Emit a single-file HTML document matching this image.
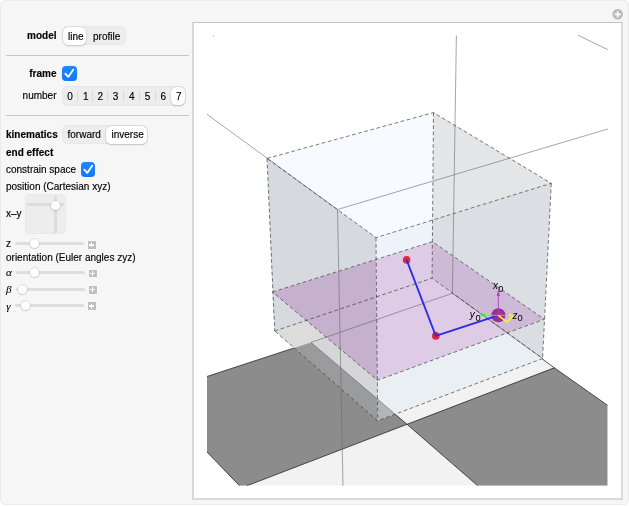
<!DOCTYPE html>
<html>
<head>
<meta charset="utf-8">
<style>
html,body{margin:0;padding:0;background:#fff;}
body{width:629px;height:506px;position:relative;overflow:hidden;font-family:"Liberation Sans",sans-serif;font-size:10px;color:#000;-webkit-text-stroke:0.15px #000;}
#outer{position:absolute;left:0;top:0;width:627px;height:503px;background:#f6f6f6;border:1px solid #eaeaea;border-radius:5px;}
.t{position:absolute;white-space:nowrap;line-height:12px;height:12px;}
.b{font-weight:bold;}
.r{text-align:right;}
.sep{position:absolute;left:6px;width:183px;height:1px;background:#c6c6c6;}
.seg{position:absolute;background:#ededed;border-radius:6px;box-shadow:inset 0 0 0 0.5px #e2e2e2;}
.sel{position:absolute;background:#fff;border-radius:5.5px;box-shadow:0 0 0 0.5px #cfcfcf,0 1px 1.5px rgba(0,0,0,0.22);}
.chk{position:absolute;width:14.6px;height:14.6px;border-radius:3.8px;background:linear-gradient(#2386fc,#117afa);}
.track{position:absolute;height:3px;border-radius:1.5px;background:#dedede;}
.knob{position:absolute;width:9px;height:9px;border-radius:50%;background:#fff;box-shadow:0 0 0 0.5px #cfcfcf,0 0.5px 1.5px rgba(0,0,0,0.3);}
.plus{position:absolute;width:7.6px;height:7.6px;background:#bfbfbf;box-shadow:0 0 0 0.6px #fbfbfb;}
.plus:before{content:"";position:absolute;left:1.3px;top:3.1px;width:5px;height:1.4px;background:#fff;}
.plus:after{content:"";position:absolute;left:3.1px;top:1.3px;width:1.4px;height:5px;background:#fff;}
.gk{font-family:"Liberation Serif",serif;font-style:italic;font-size:11px;-webkit-text-stroke:0.1px #000;}
#gp{position:absolute;left:192px;top:22px;width:427px;height:475px;background:#fff;border-style:solid;border-color:#c4c4c4 #dadada #dadada #dadada;border-width:1px 2px 2px 2px;}
</style>
</head>
<body>
<div id="outer"></div>

<!-- controls -->
<div id="ctl" style="position:absolute;left:0;top:0;width:629px;height:506px;will-change:transform;">
<div class="t b r" style="left:0;width:56.5px;top:30px;">model</div>
<div class="seg" style="left:62.3px;top:26.3px;width:63.3px;height:19.2px;"></div>
<div class="sel" style="left:62.8px;top:26.7px;width:23.4px;height:18.4px;"></div>
<div class="t" style="left:68px;top:30.5px;">line</div>
<div class="t" style="left:93px;top:30.5px;">profile</div>

<div class="sep" style="top:55px;"></div>

<div class="t b r" style="left:0;width:56.5px;top:68px;">frame</div>
<div class="chk" style="left:62.3px;top:66.3px;"><svg width="15" height="15" viewBox="0 0 15 15" style="position:absolute;left:0;top:0"><path d="M3.3 7.7 L6.2 10.9 L11.2 3.8" fill="none" stroke="#fff" stroke-width="1.8" stroke-linecap="round" stroke-linejoin="round"/></svg></div>

<div class="t r" style="left:0;width:56.5px;top:90px;">number</div>
<div class="seg" style="left:62.3px;top:86.3px;width:123.7px;height:20px;"></div>
<div class="sel" style="left:170.8px;top:87.2px;width:14.6px;height:18.2px;"></div>
<div class="t" style="left:60.1px;width:20px;text-align:center;top:91px;">0</div>
<div class="t" style="left:75.7px;width:20px;text-align:center;top:91px;">1</div>
<div class="t" style="left:90.2px;width:20px;text-align:center;top:91px;">2</div>
<div class="t" style="left:105.5px;width:20px;text-align:center;top:91px;">3</div>
<div class="t" style="left:121.8px;width:20px;text-align:center;top:91px;">4</div>
<div class="t" style="left:137.6px;width:20px;text-align:center;top:91px;">5</div>
<div class="t" style="left:153.4px;width:20px;text-align:center;top:91px;">6</div>
<div class="t" style="left:168.7px;width:20px;text-align:center;top:91px;">7</div>
<div style="position:absolute;left:77.4px;top:91px;width:1px;height:10.5px;background:#dadada;"></div>
<div style="position:absolute;left:92.3px;top:91px;width:1px;height:10.5px;background:#dadada;"></div>
<div style="position:absolute;left:107.2px;top:91px;width:1px;height:10.5px;background:#dadada;"></div>
<div style="position:absolute;left:122.8px;top:91px;width:1px;height:10.5px;background:#dadada;"></div>
<div style="position:absolute;left:139.1px;top:91px;width:1px;height:10.5px;background:#dadada;"></div>
<div style="position:absolute;left:154.9px;top:91px;width:1px;height:10.5px;background:#dadada;"></div>


<div class="sep" style="top:115px;"></div>

<div class="t b" style="left:6px;top:129px;">kinematics</div>
<div class="seg" style="left:62.2px;top:125.3px;width:85.7px;height:19px;"></div>
<div class="sel" style="left:105.8px;top:125.8px;width:41.6px;height:18px;"></div>
<div class="t" style="left:67.5px;top:128.5px;">forward</div>
<div class="t" style="left:111.5px;top:128.5px;">inverse</div>

<div class="t b" style="left:6px;top:147px;">end effect</div>
<div class="t" style="left:6px;top:164px;">constrain space</div>
<div class="chk" style="left:80.8px;top:162.3px;"><svg width="15" height="15" viewBox="0 0 15 15" style="position:absolute;left:0;top:0"><path d="M3.3 7.7 L6.2 10.9 L11.2 3.8" fill="none" stroke="#fff" stroke-width="1.8" stroke-linecap="round" stroke-linejoin="round"/></svg></div>
<div class="t" style="left:6px;top:180.5px;">position (Cartesian xyz)</div>

<div class="t" style="left:6px;top:207.5px;">x&#8211;y</div>
<div style="position:absolute;left:24.9px;top:193.9px;width:41.1px;height:39.8px;border-radius:5px;background:#ededed;box-shadow:inset 0 0 0 0.5px #e4e4e4;"></div>
<div style="position:absolute;left:27px;top:203px;width:37px;height:2.5px;background:#dcdcdc;border-radius:1px;"></div>
<div style="position:absolute;left:54px;top:195.5px;width:2.6px;height:37.5px;background:#dcdcdc;border-radius:1px;"></div>
<div class="knob" style="left:50.5px;top:200.5px;"></div>

<div class="t" style="left:6px;top:238.4px;">z</div>
<div class="track" style="left:15px;top:242.2px;width:69px;"></div>
<div class="knob" style="left:29.9px;top:239.4px;"></div>
<div class="plus" style="left:88px;top:241.1px;"></div>

<div class="t" style="left:6px;top:252.2px;">orientation (Euler angles zyz)</div>

<div class="t gk" style="left:6px;top:266.3px;">&#945;</div>
<div class="track" style="left:16px;top:271px;width:69px;"></div>
<div class="knob" style="left:29.7px;top:268px;"></div>
<div class="plus" style="left:89px;top:269.5px;"></div>

<div class="t gk" style="left:6px;top:283px;">&#946;</div>
<div class="track" style="left:16px;top:288px;width:69px;"></div>
<div class="knob" style="left:17.8px;top:284.8px;"></div>
<div class="plus" style="left:89px;top:286px;"></div>

<div class="t gk" style="left:6.3px;top:299.6px;">&#947;</div>
<div class="track" style="left:15px;top:303.7px;width:69px;"></div>
<div class="knob" style="left:20.6px;top:300.8px;"></div>
<div class="plus" style="left:88px;top:302.3px;"></div>

</div>
<!-- plus icon top-right -->
<svg style="position:absolute;left:611px;top:8px" width="13" height="13" viewBox="0 0 13 13"><circle cx="6.7" cy="6.3" r="5.2" fill="#b9b9b9"/><path d="M6.7 3.2 V9.4 M3.6 6.3 H9.8" stroke="#fff" stroke-width="1.7"/></svg>

<!-- graphic panel -->
<div id="gp"></div>
<svg id="g3d" style="position:absolute;left:0;top:0;will-change:transform" width="629" height="506" viewBox="0 0 629 506">
<defs><clipPath id="cp"><rect x="207" y="35.5" width="400.7" height="450.3"/></clipPath>
<radialGradient id="sph" cx="0.5" cy="0.42" r="0.6"><stop offset="0" stop-color="#c62c8c"/><stop offset="0.3" stop-color="#b02c90"/><stop offset="0.55" stop-color="#9a2e94"/><stop offset="1" stop-color="#873a90"/></radialGradient>
</defs>
<g clip-path="url(#cp)">
<polygon points="407,424.3 311,342.4 452.4,293.3 554.3,367.8" fill="#f2f2f2"/>
<polygon points="407,424.3 477.8,485.8 246.8,485.8" fill="#f2f2f2"/>
<polygon points="207,376.5 311,342.4 407,424.3 246.8,485.8 239.5,485.8 207,452" fill="#8c8c8c"/>
<polygon points="407,424.3 554.3,367.8 607.7,405.4 607.7,485.8 477.8,485.8" fill="#8c8c8c"/>
<g fill="none" stroke="#1c1c1c" stroke-width="0.75">
<polyline points="207,376.5 311,342.4 452.4,293.3 554.3,367.8 607.7,405.4"/>
<polyline points="311,342.4 407,424.3 477.8,485.8"/>
<polyline points="554.3,367.8 407,424.3 246.8,485.8"/>
<polyline points="207,452 239.5,485.8"/>
</g>
</g>
<g stroke="none">
<polygon points="267,158.4 433.5,112.6 432.6,220.1 376,237.6" fill="#f7fafe"/>
<polygon points="433.5,112.6 551.3,183.3 432.6,220.1" fill="#e4e5e7"/>
<polygon points="267,158.4 376,237.6 376.2,259.4 272.5,292" fill="#d6dade"/>
<polygon points="272.5,292 377.5,380.3 377.7,420.8 274.7,331" fill="#dcdcdd"/>
<polygon points="272.5,292 306.3,320.4 274.7,331" fill="#d6dade"/>
<polygon points="326.2,337.1 377.5,380.3 377.5,399.1 311,342.4" fill="#d6d6d8"/>
<polygon points="294.1,347.9 311,342.4 377.5,399.1 377.7,420.8" fill="#9a9b9d"/>
<polygon points="272.5,292 376.2,259.4 377.5,380.3" fill="#c5b1cd"/>
<polygon points="376,237.6 432.6,220.1 432.4,241.7 376.2,259.4" fill="#eef3f9"/>
<polygon points="432.6,220.1 551.3,183.3 544.4,319.3 432.4,241.7" fill="#dbdfe3"/>
<polygon points="376.2,259.4 432.4,241.7 432.1,278.2 507.3,332.9 377.5,380.3" fill="#decbe6"/>
<polygon points="432.4,241.7 544.4,319.3 507.3,332.9 432.1,278.2" fill="#cdbad6"/>
<polygon points="544.4,319.3 542.6,358.5 507.3,332.9" fill="#dadde1"/>
<polygon points="377.5,380.3 507.3,332.9 542.6,358.5 377.7,420.8" fill="#eaeff3"/>
<polygon points="377.5,399.1 395.2,414.2 377.7,420.8" fill="#b1b5b8"/>
</g>
<g fill="none" stroke="#505050" stroke-width="0.5">
<polyline points="311,342.4 452.4,293.3 542.6,358.5"/>
<polyline points="311,342.4 395.2,414.2"/>
</g>
<g fill="none" stroke="#6a6a6a" stroke-width="0.6">
<line x1="207" y1="114.3" x2="337.5" y2="209.5"/>
<line x1="337.5" y1="209.5" x2="607.7" y2="129"/>
<line x1="337.5" y1="209.5" x2="343" y2="485.8"/>
<line x1="456.4" y1="35.5" x2="452.4" y2="293.3"/>
<line x1="578" y1="35.2" x2="607.7" y2="49.6"/>
<line x1="213.6" y1="35.4" x2="213.7" y2="36.6"/>
</g>
<g fill="none" stroke="#2a2a2a" stroke-width="0.62" stroke-dasharray="3.8,2.5">
<polygon points="267,158.4 433.5,112.6 551.3,183.3 376,237.6"/>
<polygon points="274.7,331 432.1,278.2 542.6,358.5 377.7,420.8"/>
<polygon points="272.5,292 432.4,241.7 544.4,319.3 377.5,380.3"/>
<line x1="267" y1="158.4" x2="274.7" y2="331"/>
<line x1="433.5" y1="112.6" x2="432.1" y2="278.2"/>
<line x1="551.3" y1="183.3" x2="542.6" y2="358.5"/>
<line x1="376" y1="237.6" x2="377.7" y2="420.8"/>
</g>
<circle cx="406.6" cy="259.9" r="3.8" fill="#e8243c"/>
<circle cx="435.8" cy="335.9" r="3.8" fill="#e8243c"/>
<circle cx="498.4" cy="315.3" r="7" fill="url(#sph)"/>
<g fill="none" stroke="#2a2ae8" stroke-width="1.8" stroke-linecap="round" stroke-linejoin="round">
<polyline points="406.6,259.9 435.8,335.9 491.5,317.7"/>
</g>
<line x1="491" y1="317.85" x2="497.5" y2="315.7" stroke="#2a2ae8" stroke-width="1.8" stroke-opacity="0.7"/>
<line x1="498.3" y1="315" x2="498.3" y2="294" stroke="#b040b4" stroke-width="0.9"/>
<polygon points="498.3,289.5 496.7,296 499.9,296" fill="#b040b4"/>
<line x1="498" y1="315.3" x2="483" y2="315.3" stroke="#5ce65c" stroke-width="0.9"/>
<polygon points="479.6,315.3 485,313.4 485,317.2" fill="#38f038"/>
<line x1="498" y1="315.3" x2="510" y2="315.3" stroke="#f2c040" stroke-width="0.7"/>
<polygon points="513.4,315.3 509,313.6 509,317" fill="#f8f030"/>
<polyline points="498.6,315.6 507,322.2 512.8,316.2" fill="none" stroke="#f8f424" stroke-width="1.7" stroke-linejoin="miter"/>
<g font-family="Liberation Sans, sans-serif" fill="#000">
<text x="493.1" y="289" font-size="10" font-style="italic">x</text><text x="498.2" y="291.6" font-size="9.3">0</text>
<text x="469.7" y="317.6" font-size="10" font-style="italic">y</text><text x="475.4" y="320.5" font-size="9.3">0</text>
<text x="512.6" y="319" font-size="10" font-style="italic">z</text><text x="517.5" y="321.2" font-size="9.3">0</text>
</g>
</svg>

</body>
</html>
